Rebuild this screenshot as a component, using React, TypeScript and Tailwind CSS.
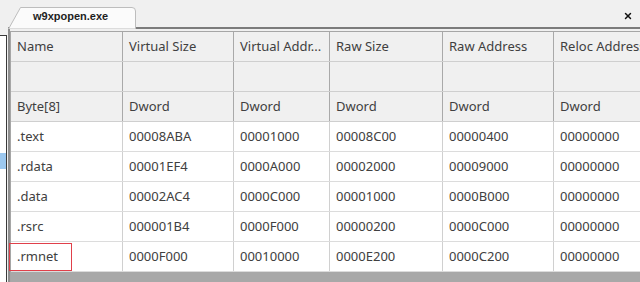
import { X } from "lucide-react";

const columns = [
  { title: "Name", width: "w-[112px]" },
  { title: "Virtual Size", width: "w-[111px]" },
  { title: "Virtual Addr...", width: "w-[96px]" },
  { title: "Raw Size", width: "w-[113px]" },
  { title: "Raw Address", width: "w-[111px]" },
  { title: "Reloc Address", width: "w-[130px]" },
];

const types = ["Byte[8]", "Dword", "Dword", "Dword", "Dword", "Dword"];

const sections = [
  [".text", "00008ABA", "00001000", "00008C00", "00000400", "00000000"],
  [".rdata", "00001EF4", "0000A000", "00002000", "00009000", "00000000"],
  [".data", "00002AC4", "0000C000", "00001000", "0000B000", "00000000"],
  [".rsrc", "000001B4", "0000F000", "00000200", "0000C000", "00000000"],
  [".rmnet", "0000F000", "00010000", "0000E200", "0000C200", "00000000"],
];

function HeaderRow({ cells }: { cells: string[] }) {
  return (
    <div className="flex h-[30px] shrink-0 border-b border-[#cfcfcf] bg-[#f0f0f0]">
      {cells.map((c, i) => (
        <div
          key={i}
          className={`${columns[i].width} shrink-0 flex items-center pl-[6px] border-r border-[#a9a9a9] whitespace-nowrap overflow-hidden`}
        >
          {c}
        </div>
      ))}
    </div>
  );
}

function DataRow({ cells, marked }: { cells: string[]; marked?: boolean }) {
  return (
    <div className="flex h-[30px] shrink-0 border-b border-[#dcdcdc] bg-white">
      {cells.map((c, i) => (
        <div
          key={i}
          className={`${columns[i].width} relative shrink-0 flex items-center pl-[6px] border-r border-[#d0d0d0] whitespace-nowrap`}
        >
          {c}
          {marked && i === 0 && (
            <div className="absolute left-[-2px] top-[1px] w-[63px] h-[28px] border border-[#e0404a]" />
          )}
        </div>
      ))}
    </div>
  );
}

export default function App() {
  return (
    <div className="w-[640px] h-[282px] overflow-hidden bg-[#f0f0f0] flex text-[13px] text-[#404040] font-['Noto_Sans','Liberation_Sans',sans-serif]">
      {/* window behind, left edge */}
      <div className="w-[7px] shrink-0 flex flex-col">
        <div className="h-[35px] shrink-0" />
        <div className="flex-1 bg-white border-t border-r border-[#3a3a3a] flex flex-col">
          <div className="h-[117px] shrink-0" />
          <div className="h-[16px] bg-[#9cc8ef]" />
        </div>
      </div>

      <div className="flex-1 flex flex-col min-w-0">
        {/* tab strip */}
        <div className="h-[27px] shrink-0 flex items-end justify-between pl-[1px] pr-[7px]">
          <div className="relative w-[128px] h-[23px] translate-y-[2px]">
            <svg className="absolute inset-0" width="128" height="23" viewBox="0 0 128 23">
              <path d="M0.5 23 L12.5 1.5 L124 1.5 Q127.5 1.5 127.5 5 L127.5 23 Z" fill="#fbfbfb" stroke="#bdbdbd" />
            </svg>
            <span className="relative flex h-full items-center pl-[25px] pb-[3px] text-[11px] font-bold text-[#1e1e1e] font-['Liberation_Sans',sans-serif]">
              w9xpopen.exe
            </span>
          </div>
          <X size={10} strokeWidth={3.5} className="mb-[6px] text-[#111]" />
        </div>

        {/* panel */}
        <div className="flex-1 flex flex-col border-l-2 border-[#8e8e8e] ml-[1px] min-h-0">
          <div className="flex h-[2px] shrink-0">
            <div className="w-[126px] bg-[#fbfbfb]" />
            <div className="flex-1 bg-[#7c7c7c]" />
          </div>
          <div className="flex-1 flex flex-col pt-[2px] min-h-0">
            <div className="flex-1 flex flex-col border-t border-l border-[#a6a6a6] min-h-0">
              <HeaderRow cells={columns.map((c) => c.title)} />
              <HeaderRow cells={["", "", "", "", "", ""]} />
              <HeaderRow cells={types} />
              {sections.map((row, i) => (
                <DataRow key={row[0]} cells={row} marked={i === sections.length - 1} />
              ))}
              <div className="flex-1 bg-[#a8a8a8]" />
            </div>
          </div>
        </div>
      </div>
    </div>
  );
}
